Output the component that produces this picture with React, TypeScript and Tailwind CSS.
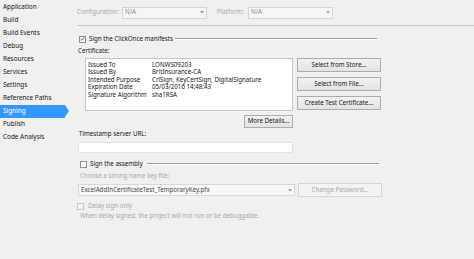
import React from "react";

const items = [
  "Application",
  "Build",
  "Build Events",
  "Debug",
  "Resources",
  "Services",
  "Settings",
  "Reference Paths",
  "Signing",
  "Publish",
  "Code Analysis",
];

function Check({ checked, disabled }: { checked?: boolean; disabled?: boolean }) {
  return (
    <div
      className={
        "w-[7px] h-[7px] border flex items-center justify-center " +
        (disabled ? "border-[#c8c8c8] bg-[#f4f4f4]" : "border-[#8e8f8f] bg-white")
      }
    >
      {checked && (
        <svg width="6" height="6" viewBox="0 0 6 6">
          <path d="M0.8 3 L2.4 4.6 L5.2 1" stroke="#2b4f81" strokeWidth="1.1" fill="none" />
        </svg>
      )}
    </div>
  );
}

function Caret({ color = "#7a7a7a" }: { color?: string }) {
  return (
    <svg width="4" height="3" viewBox="0 0 4 3">
      <path d="M0 0 L4 0 L2 2.5 Z" fill={color} />
    </svg>
  );
}

export default function App() {
  return (
    <div
      className="w-[474px] h-[259px] bg-[#f0f0f0] flex text-[6.2px] leading-none text-[#151515] overflow-hidden"
      style={{ fontFamily: '"Noto Sans", "Open Sans", sans-serif' }}
    >
      {/* Sidebar */}
      <div className="w-[70px] shrink-0 pt-[1px] flex flex-col text-[6.4px]">
        {items.map((it) =>
          it === "Signing" ? (
            <div key={it} className="relative h-[13px] w-[65px] bg-[#3399ff] text-white flex items-center pl-[3px]">
              {it}
              <div className="absolute right-[-4px] top-0 w-0 h-0 border-y-[6.5px] border-y-transparent border-l-[4px] border-l-[#3399ff]" />
            </div>
          ) : (
            <div key={it} className="h-[13px] flex items-center pl-[3px]">
              {it}
            </div>
          )
        )}
      </div>

      {/* Main */}
      <div className="flex-1 flex flex-col pl-[7px]">
        {/* Config row */}
        <div className="h-[25px] flex items-center">
          <span className="text-[#a9a9a9] w-[45px]">Configuration:</span>
          <div className="w-[85px] h-[12px] border border-[#d4d4d4] bg-[#f6f6f6] flex items-center justify-between px-[2px] text-[#8a8a8a]">
            <span>N/A</span>
            <Caret color="#9a9a9a" />
          </div>
          <span className="text-[#a9a9a9] ml-[10px] w-[31px]">Platform:</span>
          <div className="w-[85px] h-[12px] border border-[#d4d4d4] bg-[#f6f6f6] flex items-center justify-between px-[2px] text-[#8a8a8a]">
            <span>N/A</span>
            <Caret color="#9a9a9a" />
          </div>
        </div>
        <div className="h-[1px] bg-[#c9c9c9]" />

        {/* Sign ClickOnce */}
        <div className="mt-[7px] h-[12px] flex items-center pl-[2px]">
          <Check checked />
          <span className="ml-[3px] w-[86px]">Sign the ClickOnce manifests</span>
          <div className="w-[202px] h-[2px] border-t border-t-[#9c9c9c] border-b border-b-[#ffffff]" />
        </div>

        <div className="mt-[1px] h-[10px] flex items-center pl-[1px]">Certificate:</div>

        {/* Cert box + buttons */}
        <div className="mt-[2px] flex">
          <div className="ml-[8px] w-[208px] h-[53px] bg-white border border-[#c6c6c6] pt-[2px] pl-[2px] flex flex-col">
            {[
              ["Issued To", "LONWS09203"],
              ["Issued By", "BritInsurance-CA"],
              ["Intended Purpose", "CrlSign, KeyCertSign, DigitalSignature"],
              ["Expiration Date", "05/03/2016 14:48:43"],
              ["Signature Algorithm", "sha1RSA"],
            ].map(([k, v]) => (
              <div key={k} className="h-[7.5px] flex items-center">
                <span className="w-[64px]">{k}</span>
                <span>{v}</span>
              </div>
            ))}
          </div>
          <div className="ml-[4px] flex flex-col gap-[5px]">
            {["Select from Store...", "Select from File...", "Create Test Certificate..."].map((b) => (
              <div
                key={b}
                className="w-[84px] h-[14px] border border-[#acacac] bg-gradient-to-b from-[#f2f2f2] to-[#e3e3e3] flex items-center justify-center"
              >
                {b}
              </div>
            ))}
          </div>
        </div>

        <div className="mt-[4px] flex">
          <div className="ml-[167px] w-[49px] h-[13px] border border-[#acacac] bg-gradient-to-b from-[#f2f2f2] to-[#e3e3e3] flex items-center justify-center">
            More Details...
          </div>
        </div>

        <div className="mt-[1px] h-[10px] flex items-center pl-[2px]">Timestamp server URL:</div>
        <div className="mt-[3px] ml-[1px] w-[215px] h-[11px] bg-white border border-[#e2e2e2]" />

        {/* Sign assembly */}
        <div className="mt-[5px] h-[12px] flex items-center pl-[3px]">
          <Check />
          <span className="ml-[3px] w-[57px]">Sign the assembly</span>
          <div className="w-[232px] h-[2px] border-t border-t-[#9c9c9c] border-b border-b-[#ffffff]" />
        </div>

        <div className="mt-[2px] h-[9px] flex items-center pl-[3px] text-[#a8a8a8]">Choose a strong name key file:</div>

        <div className="mt-[2px] flex items-center">
          <div className="ml-[1px] w-[217px] h-[12px] border border-[#d8d8d8] bg-[#f7f7f7] flex items-center justify-between px-[2px] text-[#4a4a4a]">
            <span>ExcelAddInCertificateTest_TemporaryKey.pfx</span>
            <Caret color="#a0a0a0" />
          </div>
          <div className="ml-[3px] w-[84px] h-[14px] border border-[#d5d5d5] bg-[#f3f3f3] flex items-center justify-center text-[#a8a8a8]">
            Change Password...
          </div>
        </div>

        <div className="mt-[4px] h-[10px] flex items-center">
          <Check disabled />
          <span className="ml-[4px] text-[#a8a8a8]">Delay sign only</span>
        </div>
        <div className="mt-[1px] h-[9px] flex items-center pl-[3px] text-[#a8a8a8]">
          When delay signed, the project will not run or be debuggable.
        </div>
      </div>
    </div>
  );
}
